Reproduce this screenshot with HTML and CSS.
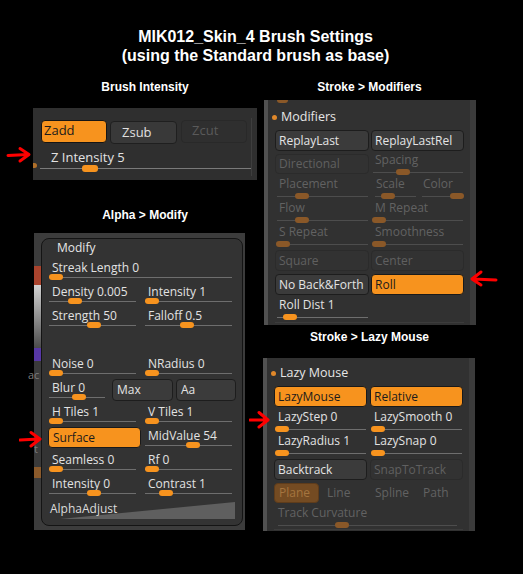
FILE: index.html
```html
<!DOCTYPE html>
<html>
<head>
<meta charset="utf-8">
<link rel="stylesheet" href="styles.css">
</head>
<body>
<header class="title">
  <div>MIK012_Skin_4 Brush Settings</div>
  <div>(using the Standard brush as base)</div>
</header>
<main class="cols">
  <section class="col">
    <h2 class="cap">Brush Intensity</h2>
    <div class="brush">
      <div class="zrow">
        <div class="zbtn on">Zadd</div>
        <div class="zbtn zsub">Zsub</div>
        <div class="zbtn dis">Zcut</div>
      </div>
      <div class="sl zi"><span class="lb">Z Intensity 5</span><i class="tr"></i><b class="kn" style="left:42px"></b></div>
    </div>

    <h2 class="cap cap-alpha">Alpha &gt; Modify</h2>
    <div class="abg">
      <div class="strip">
        <div class="st-gray"></div>
        <div class="st-red"></div>
        <div class="st-grad"></div>
        <div class="st-purple"></div>
        <div class="st-dark"><span class="st-txt">ac</span><span class="st-txt st-t">t</span></div>
        <div class="st-brown"></div>
      </div>
      <div class="apanel">
        <div class="ahdr">Modify</div>
        <div class="sl a"><span class="lb">Streak Length 0</span><i class="tr"></i><b class="kn" style="left:0px"></b></div>
        <div class="g2">
          <div class="sl a"><span class="lb">Density 0.005</span><i class="tr"></i><b class="kn" style="left:19px"></b></div>
          <div class="sl a"><span class="lb">Intensity 1</span><i class="tr"></i><b class="kn" style="left:0px"></b></div>
        </div>
        <div class="g2">
          <div class="sl a"><span class="lb">Strength 50</span><i class="tr"></i><b class="kn" style="left:38px"></b></div>
          <div class="sl a"><span class="lb">Falloff 0.5</span><i class="tr"></i><b class="kn" style="left:35px"></b></div>
        </div>
        <div class="gap24"></div>
        <div class="g2">
          <div class="sl a"><span class="lb">Noise 0</span><i class="tr"></i><b class="kn" style="left:0px"></b></div>
          <div class="sl a"><span class="lb">NRadius 0</span><i class="tr"></i><b class="kn" style="left:0px"></b></div>
        </div>
        <div class="g3">
          <div class="sl a"><span class="lb">Blur 0</span><i class="tr"></i><b class="kn" style="left:23px"></b></div>
          <div class="btn abtn">Max</div>
          <div class="btn abtn">Aa</div>
        </div>
        <div class="g2">
          <div class="sl a"><span class="lb">H Tiles 1</span><i class="tr"></i><b class="kn" style="left:0px"></b></div>
          <div class="sl a"><span class="lb">V Tiles 1</span><i class="tr"></i><b class="kn" style="left:0px"></b></div>
        </div>
        <div class="g2">
          <div class="btn on surf">Surface</div>
          <div class="sl a"><span class="lb">MidValue 54</span><i class="tr"></i><b class="kn" style="left:41px"></b></div>
        </div>
        <div class="g2">
          <div class="sl a"><span class="lb">Seamless 0</span><i class="tr"></i><b class="kn" style="left:0px"></b></div>
          <div class="sl a"><span class="lb">Rf 0</span><i class="tr"></i><b class="kn" style="left:0px"></b></div>
        </div>
        <div class="g2">
          <div class="sl a"><span class="lb">Intensity 0</span><i class="tr"></i><b class="kn" style="left:38px"></b></div>
          <div class="sl a"><span class="lb">Contrast 1</span><i class="tr"></i><b class="kn" style="left:14px"></b></div>
        </div>
        <div class="adj">
          <svg class="ramp" width="187" height="22" viewBox="0 0 187 22"><polygon points="11,19 186,2 186,19" fill="#5f5f5f"/></svg>
          <span class="adj-lb">AlphaAdjust</span>
        </div>
      </div>
    </div>
  </section>

  <section class="col">
    <h2 class="cap">Stroke &gt; Modifiers</h2>
    <div class="zp mod">
      <div class="topband"><b class="stub"></b></div>
      <div class="hdr"><span class="dot"></span>Modifiers</div>
      <div class="g2m">
        <div class="btn">ReplayLast</div>
        <div class="btn">ReplayLastRel</div>
      </div>
      <div class="g2m r1">
        <div class="btn dis dir">Directional</div>
        <div class="sl m d"><span class="lb">Spacing</span><i class="tr"></i><b class="kn" style="left:25px"></b></div>
      </div>
      <div class="g2m">
        <div class="sl m d"><span class="lb">Placement</span><i class="tr"></i><b class="kn" style="left:20px"></b></div>
        <div class="split">
          <div class="sl m d sc"><span class="lb">Scale</span><i class="tr"></i><b class="kn" style="left:10px"></b></div>
          <div class="sl m d sc"><span class="lb">Color</span><i class="tr"></i><b class="kn" style="left:32px"></b></div>
        </div>
      </div>
      <div class="g2m">
        <div class="sl m d"><span class="lb">Flow</span><i class="tr"></i><b class="kn" style="left:20px"></b></div>
        <div class="sl m d"><span class="lb">M Repeat</span><i class="tr"></i><b class="kn" style="left:1px"></b></div>
      </div>
      <div class="g2m">
        <div class="sl m d"><span class="lb">S Repeat</span><i class="tr"></i><b class="kn" style="left:1px"></b></div>
        <div class="sl m d"><span class="lb">Smoothness</span><i class="tr"></i><b class="kn" style="left:1px"></b></div>
      </div>
      <div class="g2m sq">
        <div class="btn dis">Square</div>
        <div class="btn dis">Center</div>
      </div>
      <div class="g2m nb">
        <div class="btn">No Back&amp;Forth</div>
        <div class="btn on">Roll</div>
      </div>
      <div class="g2m rd">
        <div class="sl m"><span class="lb">Roll Dist 1</span><i class="tr"></i><b class="kn" style="left:8px"></b></div>
      </div>
      <div class="foot"></div>
    </div>

    <h2 class="cap cap-lazy">Stroke &gt; Lazy Mouse</h2>
    <div class="zp lazy">
      <div class="hdr"><span class="dot"></span>Lazy Mouse</div>
      <div class="g2l">
        <div class="btn on">LazyMouse</div>
        <div class="btn on">Relative</div>
      </div>
      <div class="g2l ls">
        <div class="sl m"><span class="lb">LazyStep 0</span><i class="tr"></i><b class="kn" style="left:1px"></b></div>
        <div class="sl m"><span class="lb">LazySmooth 0</span><i class="tr"></i><b class="kn" style="left:1px"></b></div>
      </div>
      <div class="g2l">
        <div class="sl m"><span class="lb">LazyRadius 1</span><i class="tr"></i><b class="kn" style="left:1px"></b></div>
        <div class="sl m"><span class="lb">LazySnap 0</span><i class="tr"></i><b class="kn" style="left:1px"></b></div>
      </div>
      <div class="g2l bt">
        <div class="btn">Backtrack</div>
        <div class="btn dis">SnapToTrack</div>
      </div>
      <div class="g4">
        <div class="btn plane">Plane</div>
        <div class="btn flat">Line</div>
        <div class="btn flat">Spline</div>
        <div class="btn flat">Path</div>
      </div>
      <div class="sl m d tc"><span class="lb">Track Curvature</span><i class="tr"></i><b class="kn" style="left:61px"></b></div>
      <div class="foot"></div>
    </div>
  </section>
</main>

<svg class="arrow a1" width="26" height="18" viewBox="0 0 26 18"><path d="M2 9.5 L22 8.5 M14 2.5 L23 8.5 L14 15" fill="none" stroke="#f00" stroke-width="3" stroke-linecap="round" stroke-linejoin="round"/></svg>
<svg class="arrow a2" width="30" height="20" viewBox="0 0 30 20"><path d="M27 11 L4 10 M12 3 L3 10 L12 16" fill="none" stroke="#f00" stroke-width="3" stroke-linecap="round" stroke-linejoin="round"/></svg>
<svg class="arrow a3" width="24" height="20" viewBox="0 0 24 20"><path d="M1 10 L20 9 M12 2.5 L21 9 L12 16" fill="none" stroke="#f00" stroke-width="3" stroke-linecap="round" stroke-linejoin="round"/></svg>
<svg class="arrow a4" width="22" height="20" viewBox="0 0 22 20"><path d="M1 10 L18 10 M10 2.5 L19 10 L10 17" fill="none" stroke="#f00" stroke-width="3" stroke-linecap="round" stroke-linejoin="round"/></svg>
</body>
</html>
```

FILE: styles.css
```css
* { box-sizing: border-box; }
html, body { margin: 0; padding: 0; background: #000; }
body {
  width: 523px;
  height: 574px;
  overflow: hidden;
  position: relative;
  font-family: "Open Sans", "Noto Sans", sans-serif;
  font-size: 12px;
  color: #e2e2e2;
}

.title {
  padding-top: 27px;
  padding-right: 12px;
  text-align: center;
  font: bold 16px/19px "Liberation Sans", Arial, sans-serif;
  color: #fff;
}

.cols {
  display: grid;
  grid-template-columns: 224px 213px;
  column-gap: 6px;
  padding-left: 33px;
  margin-top: 15px;
  align-items: start;
}
.col { display: flex; flex-direction: column; }

.cap {
  margin: 0;
  font: bold 12px/14px "Liberation Sans", Arial, sans-serif;
  color: #fff;
  text-align: center;
}
.brush { margin-top: 14px; }
.cap-alpha { margin-top: 28px; }
.cap-lazy { margin-top: 5px; }

/* ---------- generic widgets ---------- */
.btn {
  height: 21px;
  border: 1px solid #1d1d1d;
  border-radius: 4px;
  background: #3b3b3b;
  color: #e4e4e4;
  line-height: 19px;
  padding-left: 3px;
  white-space: nowrap;
  overflow: hidden;
}
.btn.on { background: #f7931e; color: #1b1b1b; border-color: #1a1a1a; }
.btn.dis { background: #323232; border-color: #2b2b2b; color: #606060; }

.sl { position: relative; height: 24px; }
.sl .lb { display: block; line-height: 16px; padding-left: 3px; white-space: nowrap; }
.sl .tr { position: absolute; left: 0; right: 4px; top: 17px; height: 1px; background: #6e6e6e; }
.sl .kn { position: absolute; top: 14px; width: 14px; height: 6px; border-radius: 3px; background: #f7931e; }
.sl.d .lb { color: #626262; }
.sl.d .tr { background: #4d4d4d; }
.sl.d .kn { background: #8a5828; }

/* ---------- brush intensity ---------- */
.brush {
  position: relative;
  height: 72px;
  background: #2f2f2f;
  padding: 12px 0 0 8px;
}
.brush::before {
  content: "";
  position: absolute;
  left: 0; top: 55px;
  width: 4px; height: 5px;
  border-radius: 0 3px 3px 0;
  background: #b0702a;
}
.brush::after {
  content: "";
  position: absolute;
  left: 218px; top: 10px;
  width: 1px; height: 58px;
  background: #3e3e3e;
}
.zrow { display: flex; }
.zbtn {
  width: 66px;
  height: 23px;
  border: 1px solid #1f1f1f;
  border-radius: 4px;
  background: #393939;
  font-size: 13px;
  line-height: 19px;
  padding-left: 2px;
  color: #e0e0e0;
}
.zbtn.on { background: #f7931e; color: #1b1b1b; border-color: #151515; }
.zbtn.zsub { width: 67px; margin-left: 3px; margin-top: 1px; padding-left: 11px; line-height: 21px; }
.zbtn.dis { margin-left: 4px; background: #2f2f2f; border-color: #292929; color: #5a5a5a; padding-left: 10px; }
.sl.zi { margin-top: 5px; margin-left: -1px; width: 211px; height: 24px; }
.sl.zi .lb { font-size: 13px; line-height: 17px; padding-left: 11px; }
.sl.zi .tr { top: 19px; right: 0; background: #7a7a7a; }
.sl.zi .kn { top: 16px; width: 16px; height: 7px; }

/* ---------- alpha modify ---------- */
.abg {
  display: flex;
  align-items: flex-start;
  margin-top: 11px;
  margin-left: 1px;
  width: 211px;
  height: 297px;
  background: #3c3c3c;
  padding-right: 2px;
}
.strip { width: 7px; height: 297px; display: flex; flex-direction: column; flex: none; }
.st-gray { height: 33px; background: #3c3c3c; }
.st-red { height: 19px; background: #a9432d; }
.st-grad { height: 63px; background: linear-gradient(#d2d2d2, #8a8a8a 55%, #4b4b4b); }
.st-purple { height: 13px; background: #5737a6; }
.st-dark { height: 106px; background: #3a3a3a; position: relative; }
.st-txt { position: absolute; left: -6px; top: 8px; font-size: 11px; color: #7c7c7c; line-height: 12px; }
.st-t { left: 0; top: 82px; }
.st-brown { height: 11px; background: #8b5a2b; }

.apanel {
  margin-top: 5px;
  width: 202px;
  height: 288px;
  border: 1px solid #141414;
  border-radius: 8px;
  background: #333;
  padding: 0 6px 0 7px;
  position: relative;
}
.ahdr { line-height: 18px; padding-left: 8px; margin-bottom: 3px; color: #e6e6e6; }
.g2 { display: grid; grid-template-columns: 91px 91px; column-gap: 5px; }
.g3 { display: grid; grid-template-columns: 60px 61px 60px; column-gap: 3px; }
.gap24 { height: 24px; }
.abtn { height: 22px; margin-top: -1px; padding-left: 4px; line-height: 20px; }
.surf { margin-top: -1px; margin-left: -1px; width: 93px; padding-left: 4px; }
.sl.a .tr { right: 4px; }
.adj { position: relative; height: 22px; }
.ramp { position: absolute; left: 0; top: 0; }
.adj-lb { position: relative; display: block; line-height: 16px; padding-top: 1px; padding-left: 1px; color: #dcdcdc; }

/* ---------- stroke panels ---------- */
.zp {
  border-left: 4px solid #515151;
  border-right: 6px solid #3b3b3b;
  background: #313131;
  padding: 0 6px 0 7px;
}
.zp.mod { margin-top: 6px; margin-left: 1px; width: 212px; height: 225px; }
.zp.lazy { margin-top: 14px; width: 212px; height: 173px; padding-top: 6px; }
.topband { height: 8px; position: relative; }
.stub { position: absolute; left: 2px; top: 0; width: 11px; height: 3px; border-radius: 0 0 3px 3px; background: #8a5828; }
.hdr { height: 18px; line-height: 18px; font-size: 12.5px; display: flex; align-items: center; margin-left: -3px; color: #e6e6e6; }
.dot { width: 5px; height: 5px; border-radius: 50%; background: #e0882a; margin-right: 4px; }
.g2m { display: grid; grid-template-columns: 94px 93px; column-gap: 2px; }
.hdr + .g2m, .hdr + .g2l { margin-top: 4px; }
.r1 { margin-top: 1px; }
.dir { margin-top: 2px; height: 20px; line-height: 18px; }
.sq { margin-top: 2px; }
.nb { margin-top: 3px; }
.rd { margin-top: 2px; }
.sl.m .lb { padding-left: 4px; }
.sl.m .tr { top: 20px; left: 2px; right: 1px; }
.sl.m .kn { top: 17px; }
.split { display: grid; grid-template-columns: 46px 46px; column-gap: 1px; }
.sl.sc .lb { padding-left: 5px; }
.sl.sc .tr { left: 4px; right: 1px; }
.foot { border-top: 1px solid #3c3c3c; }
.zp.mod .foot { margin-top: 1px; }

.g2l { display: grid; grid-template-columns: 93px 93px; column-gap: 3px; }
.ls { margin-top: 2px; }
.bt { margin-top: 2px; }
.g4 { display: grid; grid-template-columns: 45px 45px 45px 45px; column-gap: 3px; margin-top: 3px; }
.g4 .btn { height: 20px; line-height: 18px; }
.btn.plane { background: #744b22; border-color: #5e3c1b; color: #a5753f; padding-left: 4px; }
.btn.flat { background: transparent; border-color: transparent; color: #626262; padding-left: 4px; }
.sl.tc { margin-top: 2px; }
.sl.tc .tr { left: 4px; right: 6px; }

/* ---------- annotation arrows ---------- */
.arrow { position: absolute; }
.a1 { left: 6px; top: 146px; }
.a2 { left: 469px; top: 269px; }
.a3 { left: 19px; top: 430px; }
.a4 { left: 249px; top: 410px; }
```
